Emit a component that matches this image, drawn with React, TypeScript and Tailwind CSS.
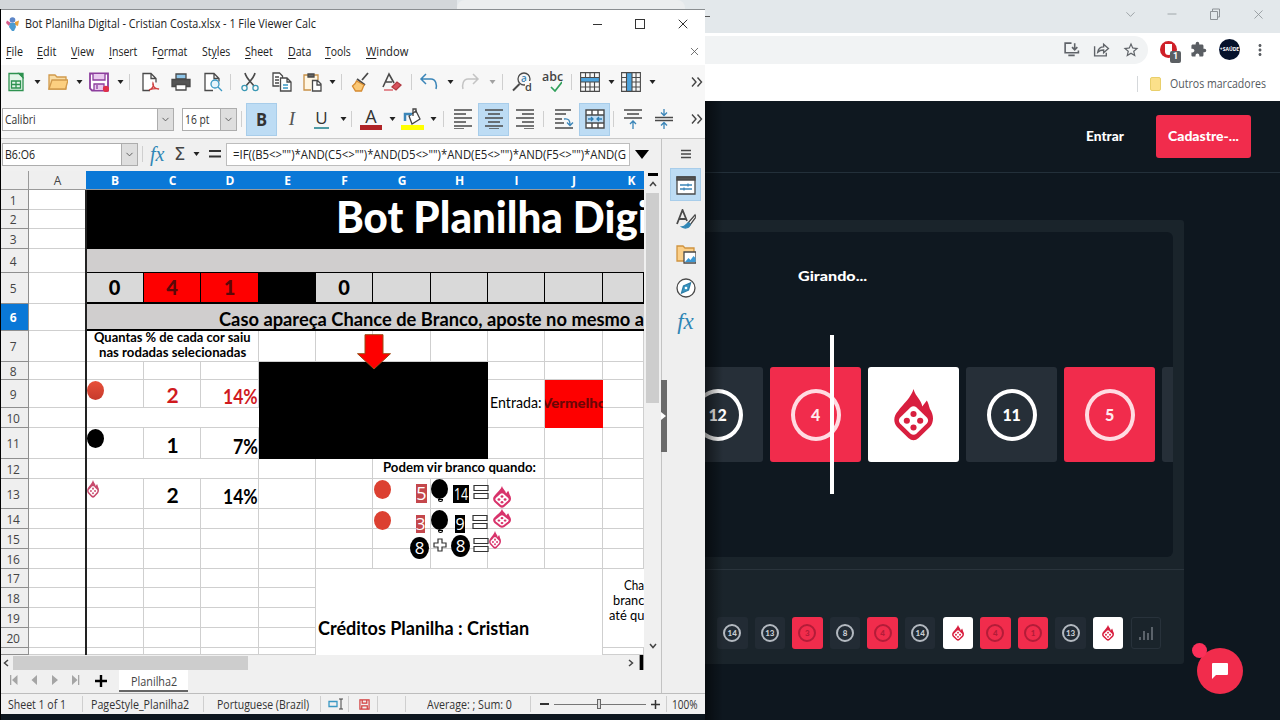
import { useLayoutEffect, useRef, useState } from "react";
import type { ReactNode } from "react";
import { ChevronDown, Minus, X } from "lucide-react";
import { MdExtension, MdMoreVert, MdStarBorder } from "react-icons/md";

const UI = "font-['Open_Sans','Noto_Sans',sans-serif]";
const CAL = "font-['Lato','Open_Sans',sans-serif]";

// One line of text, squeezed to the width it has in the narrow system fonts
function Fit({ w, className = "", children }: { w: number; className?: string; children: ReactNode }) {
  const ref = useRef<HTMLSpanElement>(null);
  const [scale, setScale] = useState(1);

  useLayoutEffect(() => {
    if (ref.current) setScale(w / ref.current.offsetWidth);
  }, [w]);

  return (
    <span className={`inline-block shrink-0 whitespace-nowrap ${className}`} style={{ width: w }}>
      <span ref={ref} className="inline-block origin-left" style={{ transform: `scaleX(${scale})` }}>
        {children}
      </span>
    </span>
  );
}

function Ico({ className = "", children }: { className?: string; children: ReactNode }) {
  return (
    <svg viewBox="0 0 20 20" fill="none" stroke="#4a4a4a" strokeWidth="1.3" className={`size-5 shrink-0 ${className}`}>
      {children}
    </svg>
  );
}

function Drop({ className = "" }: { className?: string }) {
  return (
    <svg viewBox="0 0 9 6" className={`h-1.5 w-[9px] shrink-0 fill-[#222] ${className}`}>
      <path d="M1.500 1h6l-3 4z" />
    </svg>
  );
}

function Sep({ className = "" }: { className?: string }) {
  return <div className={`h-4 w-px shrink-0 bg-[#cfcfcf] ${className}`} />;
}

function More({ className = "" }: { className?: string }) {
  return (
    <svg viewBox="0 0 12 12" fill="none" stroke="#444" strokeWidth="1.4" className={`size-3 shrink-0 ${className}`}>
      <path d="M1 1.500 5 6l-4 4.500M6.500 1.500 10.500 6l-4 4.500" />
    </svg>
  );
}

function Combo({ className = "", children }: { className?: string; children: ReactNode }) {
  return (
    <div className={`flex h-[23px] shrink-0 items-center border border-[#adadad] bg-white ${className}`}>
      <div className="flex flex-1 items-center pt-px pl-0.5">{children}</div>
      <div className="flex h-full w-4 items-center justify-center border-l border-[#adadad] bg-[#dedede]">
        <ChevronDown size={11} color="#555" />
      </div>
    </div>
  );
}

function Flame({ className = "", color = "#d81f3f" }: { className?: string; color?: string }) {
  return (
    <svg viewBox="0 0 38 52" preserveAspectRatio="none" className={`shrink-0 ${className}`}>
      <path
        fill={color}
        d="M19 0C17 8 9 15 4 22C-.5 27 -1 33 3 38L14 49Q19 53.500 24 49L35 38C39 33 39 26 35 20C34 17 33.500 14 32 11.500L27.500 17.500C27 11 21 8 19 0Z"
      />
      <path fill="#fff" d="M16 18.500Q19 16 22 18.500L32 28.500Q34.500 31.500 32 34.500L22 44.500Q19 47 16 44.500L6 34.500Q3.500 31.500 6 28.500Z" />
      <g fill={color}>
        <circle cx="19" cy="25" r="3" />
        <circle cx="12.500" cy="31.700" r="3" />
        <circle cx="25.500" cy="31.700" r="3" />
        <circle cx="19" cy="38.500" r="3" />
      </g>
    </svg>
  );
}

/* ---------- browser behind ---------- */

const REEL = ["12", "4", "", "11", "5", "-"];
const HISTORY = ["14", "13", "3", "8", "4", "14", "", "4", "1", "13", ""];
const isRed = (n: string) => n !== "" && Number(n) >= 1 && Number(n) <= 7;

function ReelTile({ n }: { n: string }) {
  const bg = n === "" ? "bg-white" : isRed(n) ? "bg-[#f12c4c]" : "bg-[#262f38]";
  return (
    <div className={`flex h-[95px] w-[91px] shrink-0 items-center justify-center rounded-[3px] ${bg}`}>
      {n === "" ? (
        <Flame className="h-[52px] w-[39px]" />
      ) : n === "-" ? null : (
        <div
          className={`flex h-[52px] w-[50px] items-center justify-center rounded-[50%] border-4 text-[16px] font-black tracking-tight ${CAL} ${
            isRed(n) ? "border-[#ffdbe2] text-[#ffe9ed]" : "border-white text-white"
          }`}
        >
          {n}
        </div>
      )}
    </div>
  );
}

function HistoryTile({ n }: { n: string }) {
  const bg = n === "" ? "bg-white" : isRed(n) ? "bg-[#f12c4c]" : "bg-[#222b34]";
  return (
    <div className={`flex h-8 w-[30.500px] shrink-0 items-center justify-center rounded-[3px] ${bg}`}>
      {n === "" ? (
        <Flame className="h-4 w-3" />
      ) : (
        <div
          className={`flex size-[18px] items-center justify-center rounded-full border-2 text-[8px] font-black ${CAL} ${
            isRed(n) ? "border-[#b31c38] text-[#b31c38]" : "border-[#b3b9c0] text-[#c7ccd2]"
          }`}
        >
          {n}
        </div>
      )}
    </div>
  );
}

function Browser() {
  return (
    <div className="flex h-full w-full flex-col bg-[#0e171f]">
      <div className="flex h-[33px] items-start bg-[#e3e8eb]">
        <div className="h-[9px] w-[457px] bg-[#d3d7da]" />
        <div className="h-[9px] w-[228px] rounded-t-lg bg-[#eceeef]" />
        <div className="mt-4 h-px w-[25px] bg-[#555]" />
        <div className="flex h-7 flex-1 items-center justify-end gap-[27px] pr-3.5 text-[#8d9296]">
          <ChevronDown size={15} strokeWidth={1.300} />
          <Minus size={14} strokeWidth={1.300} />
          <svg viewBox="0 0 14 14" fill="none" stroke="currentColor" className="mx-0.5 size-3.5">
            <path d="M2.500 4.500h7v8h-7zM4.500 4.500v-2.500h7v8h-2" />
          </svg>
          <X size={15} strokeWidth={1.300} />
        </div>
      </div>
      <div className="flex h-[33px] items-center bg-white">
        <div className="flex h-7 w-[1148px] items-center justify-end gap-[11px] rounded-r-full bg-[#f1f3f4] pr-2 text-[#5f6368]">
          <svg viewBox="0 0 16 16" fill="none" stroke="currentColor" strokeWidth="1.500" className="size-[17px]">
            <path d="M8 2H2v9h12.500V9M5 13.500h6M11 2v6M8.500 5.800 11 8.300l2.500-2.500" />
          </svg>
          <svg viewBox="0 0 16 16" fill="none" stroke="currentColor" strokeWidth="1.300" className="mr-px ml-0.5 size-[17px]">
            <path d="M1.500 5v9h11v-3M4.500 10.500C5 7 7 5.500 10 5.500V3l4.500 4-4.500 4V8.500c-2.500 0-4 .5-5.500 2z" />
          </svg>
          <MdStarBorder size={18} />
        </div>
        <div className="relative ml-3 size-[17px] shrink-0 rounded-full bg-[#cf1f28]">
          <div className="absolute top-[3px] left-[5px] h-[11px] w-[7px] rounded-t-sm rounded-b-full bg-white" />
          <div className="absolute top-2.5 left-2.5 flex h-3 w-[11px] items-center justify-center rounded-xs bg-[#5b5f63] font-['Roboto',sans-serif] text-[9px] font-bold text-white">
            1
          </div>
        </div>
        <MdExtension size={17} color="#5a5e63" className="ml-[13px] shrink-0" />
        <div className="ml-[12px] flex size-[21px] shrink-0 items-center justify-center rounded-full bg-[#06122b] font-['Open_Sans',sans-serif] text-[5px] font-bold text-white">
          +SAÚDE
        </div>
        <MdMoreVert size={18} color="#5a5e63" className="ml-[11px] shrink-0" />
      </div>
      <div className="flex h-[35px] items-center justify-end bg-white pr-3.5">
        <div className="h-4 w-px bg-[#d5d8db]" />
        <div className="ml-3 h-3.5 w-[11px] rounded-[2px] border border-[#e9cf6b] bg-[#fbe08a]" />
        <Fit w={96} className={`ml-[9px] text-[12px] text-[#55595d] ${UI}`}>
          Outros marcadores
        </Fit>
      </div>

      <div className={`flex h-[72px] shrink-0 items-center justify-end border-b border-[#23303a] bg-[#0f1820] pr-[29px] text-white ${CAL}`}>
        <Fit w={38} className="text-[13px] font-black">
          Entrar
        </Fit>
        <div className="ml-8 flex h-[43px] w-[95px] items-center justify-center rounded-[3px] bg-[#f12c4c]">
          <Fit w={71} className="text-[13px] font-black">
            Cadastre-...
          </Fit>
        </div>
      </div>

      <div className="mt-[47px] ml-[600px] flex h-[444px] w-[584px] flex-col rounded-[3px] bg-[#1a242b]">
        <div className="relative mt-3 flex h-[325px] w-[573px] flex-col overflow-hidden rounded-md bg-[#0f1820]">
          <div className={`flex h-[86px] items-center pl-[198px] text-white ${CAL}`}>
            <Fit w={69} className="text-[14px] font-black">
              Girando...
            </Fit>
          </div>
          <div className="mt-[49px] flex gap-[7px] pl-[72px]">
            {REEL.map((n, i) => (
              <ReelTile key={i} n={n} />
            ))}
          </div>
          <div className="absolute top-[103px] left-[230px] h-[159px] w-1 bg-white" />
        </div>
        <div className="mt-3 h-px bg-[#2a343c]" />
        <div className="mt-[47px] flex gap-[7.100px] pl-[117px]">
          {HISTORY.map((n, i) => (
            <HistoryTile key={i} n={n} />
          ))}
          <div className="flex h-8 w-[30.500px] items-center justify-center rounded-[3px] border border-[#28323b]">
            <svg viewBox="0 0 14 14" stroke="#7d858d" strokeWidth="1.300" className="size-3.5 shrink-0">
              <path d="M1 14v-3M5 14V5M9 14V7M13 14V1" />
            </svg>
          </div>
        </div>
      </div>

      <div className="absolute top-[648px] left-[1197px] flex size-[46px] items-center justify-center rounded-full bg-[#f12c4c]">
        <div className="absolute -top-[5px] -left-[5px] size-[15px] rounded-full bg-[#fb2f59]" />
        <svg viewBox="0 0 16 16" className="size-4 fill-white">
          <path d="M1 0h14a1 1 0 0 1 1 1v10a1 1 0 0 1-1 1H4l-4 4V1a1 1 0 0 1 1-1z" />
        </svg>
      </div>
    </div>
  );
}

/* ---------- spreadsheet window ---------- */

const MENU: [string, number, string][] = [
  ["File", 17, "ml-[5px]"],
  ["Edit", 19, "ml-[14px]"],
  ["View", 23, "ml-[15px]"],
  ["Insert", 28, "ml-[15px]"],
  ["Format", 35, "ml-[15px]"],
  ["Styles", 28, "ml-[15px]"],
  ["Sheet", 28, "ml-[15px]"],
  ["Data", 23, "ml-[15px]"],
  ["Tools", 26, "ml-[14px]"],
  ["Window", 42, "ml-[15px]"],
];

function MenuLabel({ label }: { label: string }) {
  // the access key is not always the first letter
  const at = label === "Format" ? 1 : label === "Styles" ? 2 : 0;
  return (
    <>
      {label.slice(0, at)}
      <span className="underline underline-offset-2">{label[at]}</span>
      {label.slice(at + 1)}
    </>
  );
}

function StandardBar() {
  return (
    <div className="flex h-[35px] shrink-0 items-center pb-0.5">
      <Ico className="ml-[5px]">
        <path stroke="#2e9250" fill="#e4f5e9" d="M3 1.500h10l4 4v13H3z" />
        <path stroke="#2e9250" fill="#2e9250" d="M13 1.500h4v4z" />
        <path stroke="#2e9250" d="M5.500 9h9v7h-9zM5.500 12.500h9M10 9v7" />
      </Ico>
      <Drop className="ml-[7px]" />
      <Ico className="ml-[6px]">
        <path stroke="#d19a4c" fill="#f9dda5" d="M1 17V3h6l2 2h9v12z" />
        <path stroke="#d19a4c" fill="#fccf80" d="M1 17 4 8h16l-2.500 9z" />
      </Ico>
      <Drop className="ml-[7px]" />
      <Ico className="ml-[5px]">
        <path stroke="#8d3f9e" strokeWidth="1.800" fill="#fff" d="M1 1.500h18v17H3l-2-2z" />
        <path stroke="#8d3f9e" fill="#e9c9ef" d="M4 2v6h12V2M5 18v-6h10v6M8 13v4" />
        <circle cx="17" cy="17" r="2.500" fill="#e0304a" stroke="#e0304a" />
      </Ico>
      <Drop className="ml-[7px]" />
      <Sep className="ml-1" />
      <Ico className="ml-[10px]">
        <path fill="#fff" d="M10 18.500H3v-17h8l5 5v4M11 1.500v5h5" />
        <path stroke="#d04040" d="M9 18c4-1 5-5 4-7-1 4 3 6 6 6-4-1-7 0-10 1z" />
      </Ico>
      <Ico className="ml-[11px]">
        <path fill="#8ec6ea" d="M5 2h10v5H5z" />
        <path fill="#555" d="M1 7.500h18v7H1z" />
        <path fill="#fff" d="M5 12.500h10v5.500H5z" />
      </Ico>
      <Ico className="ml-[12px]">
        <path fill="#fff" d="M10 18.500H2v-17h9l5 5v3M11 1.500v5h5" />
        <circle cx="12" cy="12" r="4" stroke="#3a98c4" fill="#e6f4fb" />
        <path stroke="#3a98c4" d="m15 15 4 4" />
      </Ico>
      <Sep className="ml-[7px]" />
      <Ico className="ml-[9px]">
        <path strokeWidth="1.600" d="M5 1c1 5 6 9 9 13M15 1c-1 5-6 9-9 13" />
        <circle cx="4.500" cy="16" r="2.600" stroke="#3a98b4" />
        <circle cx="15.500" cy="16" r="2.600" stroke="#3a98b4" />
      </Ico>
      <Ico className="ml-[12px]">
        <path fill="#fff" d="M7.500 14H1V1h6.500l3 3v2M3 5h4M3 8h4M3 11h4" />
        <path fill="#fff" d="M8.500 6H15l4 4v9H8.500zM15 6v4h4" />
        <path stroke="#3a98c4" d="M11 13h5M11 16h5" />
      </Ico>
      <Ico className="ml-[10px]">
        <path stroke="#c99147" fill="#fff6e3" d="M9 18H2V3h14v5" />
        <path fill="#666" d="M6 2h6v3H6z" />
        <path fill="#fff" d="M10.500 8.500h5l3.500 3.500v7h-8.500zM15 9v4h4" />
      </Ico>
      <Drop className="ml-[6px]" />
      <Sep className="ml-1" />
      <Ico className="ml-[9px]">
        <path strokeWidth="1.800" d="M17 1 11 8M6 7l8 6" />
        <path stroke="#d68b30" fill="#fbc875" d="M5.500 9c-1 3-3 4-4 5l3 5h6l2.500-6z" />
      </Ico>
      <Ico className="ml-[11px]">
        <path strokeWidth="1.600" d="M1 15 7 2l5 9M4 10h6" />
        <path stroke="#b03a42" fill="#d8525c" d="m10 15 5-5 4 3-5 5z" />
        <path stroke="#d8525c" d="M2 18h9" />
      </Ico>
      <Sep className="ml-[9px]" />
      <Ico className="ml-[7px]">
        <path stroke="#3a85b8" strokeWidth="1.500" d="M7 2 2 7l5 5M2 7h10c5 0 6 6 5 10" />
      </Ico>
      <Drop className="ml-[7px]" />
      <Ico className="ml-[6px]">
        <path stroke="#c4c4c4" strokeWidth="1.500" d="m12 2 5 5-5 5M17 7H7C2 7 1 13 2 17" />
      </Ico>
      <Drop className="ml-[7px] opacity-40" />
      <Sep className="ml-[5px]" />
      <div className="relative ml-[9px] size-5 shrink-0">
        <Ico>
          <circle cx="12" cy="7" r="6" />
          <path strokeWidth="2" d="M7.500 12 1 18.500" />
        </Ico>
        <span className={`absolute top-0 left-[9px] text-[10px] leading-[13px] font-semibold text-[#3a85b8] ${UI}`}>a</span>
        <span className={`absolute top-[9px] left-[13px] bg-[#f9f9f9] text-[11px] leading-3 font-semibold text-[#444] ${UI}`}>d</span>
      </div>
      <div className="relative ml-[10px] size-5 shrink-0">
        <Fit w={21} className={`absolute -top-1 text-[13px] leading-4 font-semibold text-[#444] ${UI}`}>
          abc
        </Fit>
        <Ico>
          <path stroke="#31a05c" strokeWidth="1.700" d="m9 15 4 4 7-9" />
        </Ico>
      </div>
      <Sep className="ml-[9px]" />
      <Ico className="ml-2">
        <path fill="#4ea3dc" stroke="none" d="M1 6h18v4H1z" />
        <path strokeWidth="1.100" d="M.6.6h18.800v18.800H.6zM.6 5.500h18.800M.6 10h18.800M.6 15h18.800M5.500.6V6M10 .6V6M14.500.6V6M5.500 10v9.500M10 10v9.500M14.500 10v9.500" />
      </Ico>
      <Drop className="ml-[7px]" />
      <Ico className="ml-[5px]">
        <path fill="#4ea3dc" stroke="none" d="M6 1h5v18H6z" />
        <path strokeWidth="1.100" d="M.6.6h18.800v18.800H.6zM5.500.6v18.800M11 .6v18.800M15 .6v18.800M.6 5.500h5M.6 10h5M.6 15h5M11 5.500h8.500M11 10h8.500M11 15h8.500" />
      </Ico>
      <Drop className="ml-[7px]" />
      <More className="ml-[34px]" />
    </div>
  );
}

function FormattingBar() {
  return (
    <div className={`flex h-[39px] shrink-0 items-center border-b border-[#c9c9c9] text-[#333] ${UI}`}>
      <Combo className="ml-px w-[172px]">
        <Fit w={31} className="text-[12px]">
          Calibri
        </Fit>
      </Combo>
      <Combo className="ml-2 w-[55px]">
        <Fit w={24} className="text-[12px]">
          16 pt
        </Fit>
      </Combo>
      <Sep className="ml-1" />
      <div className="ml-1 flex h-[33px] w-[31px] shrink-0 items-center justify-center border border-[#a8cdea] bg-[#bddcf4] text-[18px] font-bold">
        <Fit w={11}>B</Fit>
      </div>
      <div className="ml-[5px] w-5 shrink-0 text-center font-['Liberation_Serif',serif] text-[19px] text-[#555] italic">I</div>
      <div className="ml-[12px] w-[15px] shrink-0 border-b-2 border-[#4f9ba5] text-center text-[17px] leading-[18px]">U</div>
      <Drop className="ml-[10px]" />
      <Sep className="ml-[3px]" />
      <div className="ml-[8px] w-[22px] shrink-0 border-b-[5px] border-[#b02427] text-center text-[18px] leading-[17px]">A</div>
      <Drop className="ml-[6px]" />
      <svg viewBox="0 0 23 22" fill="none" stroke="#444" strokeWidth="1.300" className="ml-[4px] h-[22px] w-[23px] shrink-0">
        <path fill="#ff0" stroke="none" d="M0 17h23v5H0z" />
        <path fill="#fff" d="m8 8 7-5 4 8-8 5z" />
        <path stroke="#3a85b8" strokeWidth="2.500" d="M4 13V6h7" />
        <path d="M12 8V1h3v4" />
      </svg>
      <Drop className="ml-[5px]" />
      <Sep className="ml-[5px]" />
      <Ico className="ml-[9px]">
        <path d="M1 1h18M1 5h12M1 9h18M1 13h12M1 17h18M1 20h10" />
      </Ico>
      <div className="ml-[5px] flex h-[33px] w-[31px] shrink-0 items-center justify-center border border-[#a8cdea] bg-[#bddcf4]">
        <Ico>
          <path d="M1 1h18M4 5h12M1 9h18M4 13h12M1 17h18M5 20h10" />
        </Ico>
      </div>
      <Ico className="ml-[6px]">
        <path d="M1 1h18M7 5h12M1 9h18M7 13h12M1 17h18M9 20h10" />
      </Ico>
      <Sep className="ml-[8px]" />
      <Ico className="ml-[10px]">
        <path d="M1 1h16M1 5h11M1 10h7M1 14h9M1 19h18" />
        <path stroke="#3a85b8" d="M10 10c5-1 6 2 6 6M13 13.500l3 3 3-3" />
      </Ico>
      <div className="ml-[5px] flex h-[33px] w-[31px] shrink-0 items-center justify-center border border-[#a8cdea] bg-[#bddcf4]">
        <Ico>
          <path fill="#fff" strokeWidth="1.400" d="M1 1h18v5H1zM1 14h18v5H1zM7 1v5M13 1v5M7 14v5M13 14v5M1 6v8M19 6v8" />
          <path stroke="#2f7fb5" d="M3 10h5M12 10h5M6 8l2 2-2 2M14 8l-2 2 2 2" />
        </Ico>
      </div>
      <Sep className="ml-[3px]" />
      <Ico className="ml-[9px]">
        <path d="M1 1h18M4 5h12M1 9h18" />
        <path stroke="#3a85b8" d="M10 20v-8M7 15l3-3 3 3" />
      </Ico>
      <Ico className="ml-[11px]">
        <path d="M1 8.500h18M1 11.500h18" />
        <path stroke="#3a85b8" d="M10 0v6M7 3.500l3 3 3-3M10 20v-6M7 16.500l3-3 3 3" />
      </Ico>
      <More className="ml-[17px]" />
    </div>
  );
}

function FormulaBar() {
  return (
    <div className={`flex h-8 shrink-0 items-center pb-0.5 text-[#222] ${UI}`}>
      <Combo className="ml-px w-[136px]">
        <Fit w={30} className="text-[12px]">
          B6:O6
        </Fit>
      </Combo>
      <Sep className="ml-1" />
      <div className="ml-[7px] w-5 shrink-0 font-['Liberation_Serif',serif] text-[20px] leading-6 text-[#2f86b5] italic">fx</div>
      <div className="ml-1 w-3 shrink-0 font-['DejaVu_Sans',sans-serif] text-[18px] leading-5 text-[#444]">Σ</div>
      <Drop className="ml-[6px]" />
      <svg viewBox="0 0 12 8" className="ml-[8px] h-2 w-3 shrink-0 fill-[#333]">
        <path d="M0 0h12v2H0zM0 5.500h12v2H0z" />
      </svg>
      <div className="ml-[5px] flex h-[23px] w-[404px] shrink-0 items-center border border-[#bdbdbd] bg-white pt-px pl-[6px]">
        <Fit w={393} className="text-[12px]">
          {'=IF((B5<>"")*AND(C5<>"")*AND(D5<>"")*AND(E5<>"")*AND(F5<>"")*AND(G'}
        </Fit>
      </div>
      <svg viewBox="0 0 14 9" className="ml-[5px] h-[9px] w-3.5 shrink-0">
        <path d="M0 0h14L7 9z" />
      </svg>
    </div>
  );
}

const COLS = ["A", "B", "C", "D", "E", "F", "G", "H", "I", "J", "K"];
const ROWS = Array.from({ length: 21 }, (_, i) => i + 1);

// Block of cells: c/r are 1-based sheet coordinates, w/h a span
function Block({ c, r, w = 1, h = 1, className = "", children }: {
  c: number;
  r: number;
  w?: number;
  h?: number;
  className?: string;
  children?: ReactNode;
}) {
  return (
    <div
      className={`flex min-w-0 ${className}`}
      style={{ gridColumn: `${c + 1} / span ${w}`, gridRow: `${r + 1} / span ${h}` }}
    >
      {children}
    </div>
  );
}

function DoubleBox({ className }: { className: string }) {
  return (
    <svg viewBox="0 0 16 16" fill="#fff" stroke="#333" strokeWidth="1.200" className={`absolute h-4 w-4 ${className}`}>
      <path d="M1 1.500h14v5H1zM1 9.500h14v5H1z" />
    </svg>
  );
}

function Sheet() {
  return (
    <div
      className={`relative grid h-[484px] w-[643px] shrink-0 overflow-hidden bg-white text-black ${CAL} grid-cols-[28px_57px_58px_57px_58px_57px_57px_58px_57px_57px_58px_41px] grid-rows-[19px_20px_19px_20px_24px_31px_27px_31px_18px_28px_20px_31px_20px_30px_20px_20px_20px_19px_20px_20px_20px_7px]`}
    >
      <div className="border-r border-b border-[#9a9a9a] bg-[#efefef]" style={{ gridColumn: 1, gridRow: 1 }} />
      {COLS.map((name, i) => (
        <Block
          key={name}
          c={i + 1}
          r={0}
          className={`items-center justify-center border-b border-[#9a9a9a] pt-px text-[12px] ${UI} ${
            i === 0 ? "bg-[#efefef] text-[#444]" : "bg-[#0a78d7] font-bold text-white"
          } ${i === 10 ? "pl-4" : ""}`}
        >
          {name}
        </Block>
      ))}
      {ROWS.map((n) => (
        <Block
          key={n}
          c={0}
          r={n}
          className={`items-center justify-center border-r border-b border-[#8f8f8f] pt-0.5 pr-[3px] text-[12px] tracking-tight ${UI} ${
            n === 6 ? "bg-[#0a78d7] font-bold text-white" : "bg-[#efefef] text-[#444]"
          }`}
        >
          {n <= 20 ? n : ""}
        </Block>
      ))}
      {ROWS.map((n) =>
        COLS.map((name, i) => <Block key={name + n} c={i + 1} r={n} className="border-r border-b border-[#cfcfcf]" />),
      )}

      {/* banner */}
      <Block c={2} r={1} w={10} h={3} className="items-center overflow-hidden bg-black pl-[250px]">
        <Fit w={361} className="mb-[5px] text-[43px] leading-[58px] font-black text-white">
          Bot Planilha Digital
        </Fit>
      </Block>
      <Block c={2} r={4} w={10} className="border-b border-black bg-[#d0cece]" />
      {["0", "4", "1", "", "0", "", "", "", "", ""].map((v, i) => (
        <Block
          key={i}
          c={i + 2}
          r={5}
          className={`items-center justify-center border-r border-b-2 border-black pb-0.5 text-[20px] leading-6 font-black ${
            i === 1 || i === 2 ? "bg-[#fe0000] text-[#5a0808]" : i === 3 ? "bg-black" : "bg-[#d9d9d9]"
          }`}
        >
          {v}
        </Block>
      ))}
      <Block c={2} r={6} w={10} className="items-center border-b-2 border-black bg-[#d0cece] pt-1 pl-[133px]">
        <Fit w={425} className="text-[18px] leading-5 font-bold">
          Caso apareça Chance de Branco, aposte no mesmo a
        </Fit>
      </Block>

      {/* shares of each colour */}
      <Block c={2} r={7} w={3} className="flex-col items-center border-r border-b border-[#cfcfcf] bg-white">
        <Fit w={156} className="-mt-px text-[13px] leading-[15px] font-bold">
          Quantas % de cada cor saiu
        </Fit>
        <Fit w={147} className="text-[13px] leading-[15px] font-bold">
          nas rodadas selecionadas
        </Fit>
      </Block>
      <Block c={2} r={10} w={3} className="border-b border-[#cfcfcf] bg-white" />
      <Block c={2} r={12} w={3} className="border-r border-b border-[#cfcfcf] bg-white" />
      <Block c={3} r={9} className="items-center justify-center pt-0.5 text-[21px] font-bold text-[#d01a1e]">2</Block>
      <Block c={4} r={9} className="items-center justify-end pt-1 pr-px text-[#d01a1e]">
        <Fit w={35} className="text-[20px] leading-6 font-bold">14%</Fit>
      </Block>
      <Block c={3} r={11} className="items-center justify-center pt-0.5 text-[21px] font-bold">1</Block>
      <Block c={4} r={11} className="items-center justify-end pt-1 pr-px">
        <Fit w={25} className="text-[20px] leading-6 font-bold">7%</Fit>
      </Block>
      <Block c={3} r={13} className="items-center justify-center pt-0.5 text-[21px] font-bold">2</Block>
      <Block c={4} r={13} className="items-center justify-end pt-1 pr-px">
        <Fit w={35} className="text-[20px] leading-6 font-bold">14%</Fit>
      </Block>

      <Block c={5} r={8} w={4} h={4} className="bg-black" />
      <Block c={9} r={9} h={2} className="items-center justify-end border-r border-b border-[#cfcfcf] bg-white pr-0.5 pb-[3px]">
        <Fit w={52} className="text-[15px]">Entrada:</Fit>
      </Block>
      <Block c={10} r={9} h={2} className="items-center justify-center overflow-hidden bg-[#fe0000] pb-[3px] text-[#6b0606]">
        <Fit w={64} className="text-[14px] font-black">Vermelho</Fit>
      </Block>

      <Block c={7} r={12} w={3} className="items-center border-r border-b border-[#cfcfcf] bg-white pb-[3px] pl-[10px]">
        <Fit w={153} className="text-[13px] leading-4 font-bold">Podem vir branco quando:</Fit>
      </Block>

      <Block c={6} r={17} w={5} h={5} className="items-start border-r border-[#cfcfcf] bg-white pt-[48px] pl-0.5">
        <Fit w={211} className="text-[19px] leading-[22px] font-bold">
          Créditos Planilha : Cristian
        </Fit>
      </Block>
      <Block c={11} r={17} h={4} className="flex-col items-end overflow-hidden border-b border-[#cfcfcf] bg-white pt-[8px] text-[14px] leading-[15px]">
        <Fit w={20}>Cha</Fit>
        <Fit w={31}>branc</Fit>
        <Fit w={35}>até qu</Fit>
      </Block>
      <Block c={2} r={1} h={21} className="-ml-px w-0 border-l-2 border-[#222]" />

      {/* pictures floating over the cells */}
      <div className="absolute top-[210px] left-[86px] h-[19px] w-[17px] rounded-[50%] bg-linear-to-b from-[#e8503a] to-[#c63a2c]" />
      <div className="absolute top-[258px] left-[86px] h-[19px] w-[17px] rounded-[50%] bg-black" />
      <Flame className="absolute top-[309px] left-[86px] h-[18px] w-3" color="#c8496c" />
      <svg viewBox="0 0 34 36" className="absolute top-[163px] left-[356px] h-9 w-[34px]">
        <path d="M8 .7h18v19h7.500L17 35 .5 19.700H8z" fill="#fe0000" stroke="#9a4a12" />
      </svg>
      <div className="absolute top-[309px] left-[373px] h-[19px] w-[17px] rounded-[50%] bg-[#dc4031]" />
      <div className="absolute top-[340px] left-[373px] h-[19px] w-[17px] rounded-[50%] bg-[#dc4031]" />
      <div className={`absolute top-[313px] left-[415px] flex h-[19px] w-[11px] items-center justify-center bg-[#c4474c] text-[18px] text-white ${UI}`}>5</div>
      <div className={`absolute top-[344px] left-[415px] flex h-[18px] w-[9px] items-center justify-center bg-[#c4474c] text-[17px] text-white ${UI}`}>3</div>
      <div className="absolute top-[308px] left-[430px] h-5 w-[17px] rounded-[50%] bg-black" />
      <div className="absolute top-[328px] left-[437px] h-[3px] w-[5px] rounded-b-full border border-black" />
      <div className="absolute top-[339px] left-[430px] h-5 w-[17px] rounded-[50%] bg-black" />
      <div className="absolute top-[359px] left-[437px] h-[3px] w-[5px] rounded-b-full border border-black" />
      <div className="absolute top-[314px] left-[452px] flex h-[18px] w-4 items-center justify-center bg-black text-white">
        <Fit w={14} className={`text-[16px] leading-[18px] ${UI}`}>14</Fit>
      </div>
      <div className={`absolute top-[344px] left-[454px] flex h-[18px] w-[10px] items-center justify-center bg-black text-[16px] text-white ${UI}`}>9</div>
      <DoubleBox className="top-[313px] left-[472px]" />
      <DoubleBox className="top-[343px] left-[471px]" />
      <DoubleBox className="top-[366px] left-[472px]" />
      <Flame className="absolute top-[315px] left-[492px] h-[22px] w-[18px]" color="#d8336b" />
      <Flame className="absolute top-[338px] left-[492px] h-[19px] w-[18px]" color="#d8336b" />
      <Flame className="absolute top-[360px] left-[488px] h-[18px] w-3" color="#d8336b" />
      <div className={`absolute top-[366px] left-[409px] flex h-[22px] w-[19px] items-center justify-center rounded-[50%] bg-black text-[17px] text-white ${UI}`}>8</div>
      <div className={`absolute top-[364px] left-[450px] flex h-[22px] w-[19px] items-center justify-center rounded-[50%] bg-black text-[17px] text-white ${UI}`}>8</div>
      <svg viewBox="0 0 14 14" className="absolute top-[367px] left-[432px] size-3.5">
        <path d="M5 1h4v4h4v4H9v4H5V9H1V5h4z" fill="#fff" stroke="#333" strokeWidth="1.200" />
      </svg>
    </div>
  );
}

function SheetTabs() {
  return (
    <div className="flex h-[23px] shrink-0 items-start">
      <svg viewBox="0 0 70 12" fill="#a5a5a5" className="mt-1 ml-[9px] h-3 w-[70px] shrink-0">
        <path d="M0 1h1.300v10H0zM7.500 1v10L2 6zM27 1v10l-5.500-5zM42 1v10l6-5zM62 1v10l5.500-5zM68 1h1.300v10H68z" />
      </svg>
      <svg viewBox="0 0 12 12" className="mt-[5px] ml-[15px] size-3 shrink-0">
        <path d="M4.800 0h2.400v4.800H12v2.400H7.200V12H4.800V7.200H0V4.800h4.800z" />
      </svg>
      <div className={`ml-[12px] flex h-[22px] w-[69px] items-center justify-center border-b-2 border-[#666] bg-white pt-[3px] text-[#444] ${UI}`}>
        <Fit w={46} className="text-[12px]">Planilha2</Fit>
      </div>
    </div>
  );
}

function Sidebar() {
  return (
    <div className="relative flex w-[44px] shrink-0 flex-col items-center border-l border-[#c3c3c3] bg-[#efefef] pl-[4px]">
      <Ico className="mt-[5px]">
        <path d="M5 6.500h10M5 10h10M5 13.500h10" />
      </Ico>
      <div className="mt-1 flex h-[33px] w-[31px] items-center justify-center border border-[#a8cdea] bg-[#bddcf4]">
        <Ico>
          <path fill="#fff" d="M1 2h18v17H1z" />
          <path fill="#555" d="M1 2h18v3H1z" />
          <path stroke="#3a85b8" d="M4 10h12M4 14h12M12 8.500v3M8 12.500v3" />
        </Ico>
      </div>
      <Ico className="mt-[8px]">
        <path strokeWidth="1.800" d="M1 15 6.500 1 11 12M3 10h7" />
        <path fill="#fff" d="m19 6-7 8 2 2 6-8z" />
        <path stroke="#2f86b5" fill="#2f86b5" d="M13 14c-3 0-3 4-7 4 3 2 8 1 8-3z" />
      </Ico>
      <Ico className="mt-[15px]">
        <path stroke="#cf9440" fill="#fbcf88" d="M1 17V2h6l2 2h9v13z" />
        <path fill="#fff" d="M8 8h12v11H8z" />
        <path fill="#3a98d4" stroke="none" d="m9 18 3.500-4 2 2 3-4 2 2v4z" />
      </Ico>
      <Ico className="mt-[14px]">
        <circle cx="10" cy="10" r="9" fill="#fff" />
        <path fill="#3a98c4" stroke="#2f7fa8" d="m14.500 5-2 7-7 3 2-7z" />
        <circle cx="10" cy="10" r="1.300" fill="#fff" stroke="none" />
      </Ico>
      <div className="mt-[10px] font-['Liberation_Serif',serif] text-[23px] leading-7 text-[#2f86b5] italic">fx</div>
      <div className="absolute top-[241px] -left-px flex h-[72px] w-1.5 items-center bg-[#6a6a6a]">
        <div className="border-y-4 border-l-[5px] border-y-transparent border-l-white" />
      </div>
    </div>
  );
}

function StatusBar() {
  return (
    <div className={`flex h-[21px] shrink-0 items-center border-t border-[#bdbdbd] bg-[#f1f1f1] text-[12px] text-[#333] ${UI}`}>
      <Fit w={58} className="ml-[7px] pt-0.5">Sheet 1 of 1</Fit>
      <Sep className="ml-4" />
      <Fit w={98} className="ml-[8px] pt-0.5">PageStyle_Planilha2</Fit>
      <Sep className="ml-[14px]" />
      <Fit w={92} className="ml-[13px] pt-0.5">Portuguese (Brazil)</Fit>
      <Sep className="ml-[11px]" />
      <svg viewBox="0 0 16 12" fill="none" className="ml-[7px] h-3 w-4 shrink-0">
        <path stroke="#3a98c4" strokeWidth="1.300" d="M1 3.500h8v5H1z" />
        <path stroke="#444" d="M11 1h4M11 11h4M13 1v10" />
      </svg>
      <Sep className="ml-1" />
      <svg viewBox="0 0 12 12" fill="none" stroke="#d23c3c" strokeWidth="1.300" className="ml-[10px] size-[11px] shrink-0">
        <path d="M1 1h10v10H1zM3.500 1v3.500h5V1M3 11V7.500h6V11" />
      </svg>
      <Sep className="ml-[7px]" />
      <Sep className="ml-[27px]" />
      <Fit w={85} className="ml-[21px] pt-0.5">Average: ; Sum: 0</Fit>
      <Sep className="ml-[18px]" />
      <div className="ml-[9px] h-[1.500px] w-[9px] shrink-0 bg-[#333]" />
      <div className="ml-[5px] flex h-2.5 w-[92px] shrink-0 items-center">
        <div className="h-px w-[43px] bg-[#777]" />
        <div className="h-2.5 w-1 border border-[#666] bg-[#ddd]" />
        <div className="h-px flex-1 bg-[#777]" />
      </div>
      <svg viewBox="0 0 9 9" stroke="#333" strokeWidth="1.500" className="ml-[5px] size-[9px] shrink-0">
        <path d="M4.500 0v9M0 4.500h9" />
      </svg>
      <Sep className="ml-[6px]" />
      <Fit w={26} className="ml-[5px] pt-0.5">100%</Fit>
    </div>
  );
}

function CalcWindow() {
  return (
    <div className="absolute top-[9px] left-px flex h-[705px] w-[704px] flex-col overflow-hidden bg-[#f7f7f7]">
      <div className="flex h-[28px] shrink-0 items-center border-t border-[#8a8e91] bg-white pt-px">
        <svg viewBox="0 0 14 14" className="ml-[5px] h-3.5 w-3.5">
          <circle cx="6.500" cy="3" r="2.800" fill="#5d86c8" />
          <path fill="#d85c8a" d="M1 3.500 5 6 3 9 0 6z" />
          <path fill="#e9a13c" d="m9 5 4-1.500L12 9 9 8z" />
          <path fill="#4b9bd0" d="M4 6h5l1 4-2 4H6l-3-4z" />
        </svg>
        <Fit w={291} className={`ml-[5px] text-[12px] text-[#222] ${UI}`}>
          Bot Planilha Digital - Cristian Costa.xlsx - 1 File Viewer Calc
        </Fit>
        <div className="flex flex-1 items-center justify-end pr-[14px] text-[#333]">
          <div className="h-px w-[9px] bg-[#333]" />
          <div className="ml-[33px] size-2.5 border border-[#333]" />
          <X size={16} strokeWidth={1.500} className="ml-[30px]" />
        </div>
      </div>
      <div className={`flex h-[28px] shrink-0 items-center bg-white pt-px text-[12px] text-[#222] ${UI}`}>
        {MENU.map(([label, w, gap]) => (
          <Fit key={label} w={w} className={gap}>
            <MenuLabel label={label} />
          </Fit>
        ))}
        <X size={13} strokeWidth={1.500} color="#555" className="mr-[4px] ml-auto" />
      </div>
      <StandardBar />
      <FormattingBar />
      <div className="flex h-[554px] shrink-0 bg-[#f0f0f0]">
        <div className="flex w-[660px] flex-col">
          <FormulaBar />
          <div className="flex">
            <Sheet />
            <div className="flex h-[484px] w-[17px] flex-col items-center bg-[#f0f0f0]">
              <div className="mt-0.5 h-[3px] w-2.5 shrink-0 bg-black" />
              <svg viewBox="0 0 8 6" fill="none" stroke="#444" strokeWidth="1.500" className="my-[5px] h-1.5 w-2 shrink-0">
                <path d="M1 5l3-3.500L7 5" />
              </svg>
              <div className="mt-px h-[210px] w-[13px] bg-[#cdcdcd]" />
              <svg viewBox="0 0 8 6" fill="none" stroke="#444" strokeWidth="1.500" className="mt-auto mb-[6px] h-1.5 w-2 shrink-0">
                <path d="M1 1l3 3.500L7 1" />
              </svg>
            </div>
          </div>
          <div className="flex h-[15px] shrink-0 items-center">
            <svg viewBox="0 0 6 8" fill="none" stroke="#444" strokeWidth="1.500" className="ml-0.5 h-2 w-1.5">
              <path d="M5 1 1.500 4 5 7" />
            </svg>
            <div className="ml-1 h-[14px] w-[235px] bg-[#cdcdcd]" />
            <svg viewBox="0 0 6 8" fill="none" stroke="#444" strokeWidth="1.500" className="ml-auto h-2 w-1.500">
              <path d="M1 1l3.500 3L1 7" />
            </svg>
            <div className="mr-[17px] ml-[5px] h-[15px] w-[5px] border-x border-[#999] bg-black" />
          </div>
          <SheetTabs />
        </div>
        <Sidebar />
      </div>
      <StatusBar />
    </div>
  );
}

export default function App() {
  return (
    <div className="relative h-[720px] w-[1280px] overflow-hidden bg-black">
      <Browser />
      <div className="absolute top-[9px] left-0 h-[711px] w-px bg-black" />
      <div className="absolute top-[101px] left-[705px] h-[619px] w-[18px] bg-linear-to-r from-black/50 to-transparent" />
      <CalcWindow />
    </div>
  );
}
